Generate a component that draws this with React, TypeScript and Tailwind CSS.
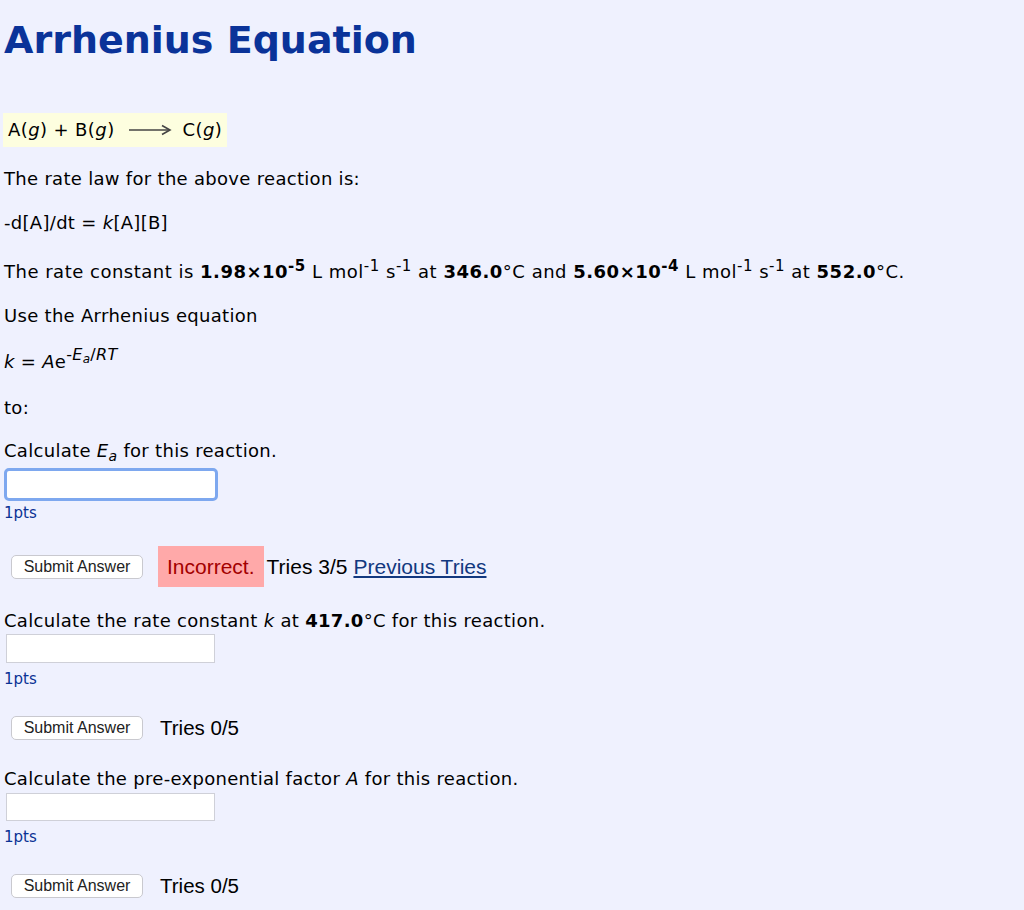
import React from "react";

const body = { fontFamily: '"DejaVu Sans", Verdana, sans-serif' };
const ui = { fontFamily: '"Liberation Sans", Arial, Helvetica, sans-serif' };

const Arrow = () => (
  <svg width="44" height="12" viewBox="0 0 44 12" className="ml-[13px] mr-[11px] inline-block">
    <line x1="1" y1="6" x2="41" y2="6" stroke="#444" strokeWidth="1.6" />
    <path d="M34 1.5 L42 6 L34 10.5" fill="none" stroke="#444" strokeWidth="1.6" />
  </svg>
);

const SubmitRow = ({ incorrect, tries }: { incorrect?: boolean; tries: string }) => (
  <div className="flex h-[41px] items-center tracking-normal" style={ui}>
    <button className="ml-[7px] h-[24px] w-[132px] rounded-[5px] border border-[#c9c9cf] bg-white text-[16px] text-[#222]">
      Submit Answer
    </button>
    {incorrect ? (
      <>
        <div className="ml-[15px] flex h-[41px] items-center bg-[#ffa9a9] px-[9px] text-[21px] text-[#a30000]">
          Incorrect.
        </div>
        <span className="ml-[3px] text-[21px] text-black">{tries}</span>
        <a href="#" className="ml-[6px] text-[21px] text-[#12387f] underline">
          Previous Tries
        </a>
      </>
    ) : (
      <span className="ml-[17px] text-[20.5px] text-black">{tries}</span>
    )}
  </div>
);

const Pts = ({ mt }: { mt: string }) => (
  <div className={`${mt} text-[15px] leading-[18px] tracking-normal text-[#0b3294]`} style={body}>
    1pts
  </div>
);

export default function App() {
  return (
    <div className="min-h-screen bg-[#eff1fe] pl-[4px] text-black" style={body}>
      <h1 className="pt-[17px] text-[38px] font-bold leading-[46px] text-[#0a3399]">
        Arrhenius Equation
      </h1>

      <div className="-ml-[1px] mt-[50px] inline-flex h-[34px] items-center bg-[#fdfedf] px-[5px] text-[18px] leading-[22px] tracking-[0.4px]">
        <span>
          A(<i>g</i>) + B(<i>g</i>)
        </span>
        <Arrow />
        <span>
          C(<i>g</i>)
        </span>
      </div>

      <div className="text-[18px] leading-[22px] tracking-[0.3px]">
        <p className="mt-[21px]">The rate law for the above reaction is:</p>
        <p className="mt-[22px]">
          -d[A]/dt = <i>k</i>[A][B]
        </p>
        <p className="mt-[27px] tracking-[0.5px]">
          The rate constant is <b>1.98×10<sup className="text-[15px]">-5</sup></b> L mol
          <sup className="text-[15px]">-1</sup> s<sup className="text-[15px]">-1</sup> at{" "}
          <b>346.0</b>°C and <b>5.60×10<sup className="text-[15px]">-4</sup></b> L mol
          <sup className="text-[15px]">-1</sup> s<sup className="text-[15px]">-1</sup> at{" "}
          <b>552.0</b>°C.
        </p>
        <p className="mt-[22px]">Use the Arrhenius equation</p>
        <p className="mt-[24px]">
          <i>k</i> = <i>A</i>e
          <sup className="text-[16px]">
            -<i>E</i>
            <sub className="text-[12px] italic">a</sub>/<i>RT</i>
          </sup>
        </p>
        <p className="mt-[24px]">to:</p>

        <p className="mt-[21px]">
          Calculate <i>E</i>
          <sub className="text-[14px] italic">a</sub> for this reaction.
        </p>
        <input
          className="mt-[6px] block h-[33px] w-[214px] rounded-[5px] border-[3px] border-[#7ea8ef] bg-white outline-none"
          type="text"
        />
        <Pts mt="mt-[3px]" />
        <div className="mt-[24px]">
          <SubmitRow incorrect tries="Tries 3/5" />
        </div>

        <p className="mt-[23px]">
          Calculate the rate constant <i>k</i> at <b>417.0</b>°C for this reaction.
        </p>
        <input
          className="ml-[2px] mt-[2px] block h-[29px] w-[209px] border border-[#cfd0d8] bg-white outline-none"
          type="text"
        />
        <Pts mt="mt-[7px]" />
        <div className="mt-[19px]">
          <SubmitRow tries="Tries 0/5" />
        </div>

        <p className="mt-[20px]">
          Calculate the pre-exponential factor <i>A</i> for this reaction.
        </p>
        <input
          className="ml-[2px] mt-[3px] block h-[28px] w-[209px] border border-[#cfd0d8] bg-white outline-none"
          type="text"
        />
        <Pts mt="mt-[7px]" />
        <div className="mt-[19px] pb-[10px]">
          <SubmitRow tries="Tries 0/5" />
        </div>
      </div>
    </div>
  );
}
